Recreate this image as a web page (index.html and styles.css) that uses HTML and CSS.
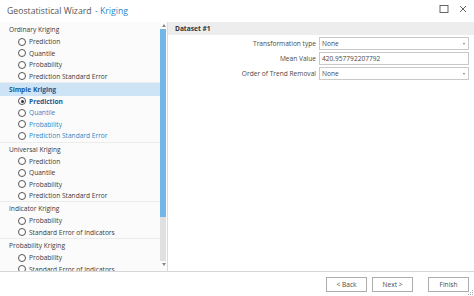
FILE: index.html
```html
<!DOCTYPE html>
<html>
<head>
<meta charset="utf-8">
<title>Geostatistical Wizard</title>
<link rel="stylesheet" href="styles.css">
</head>
<body>
<div class="window">
	<div class="titlebar">
		<div class="title">Geostatistical Wizard <span class="page">- Kriging</span></div>
		<div class="controls">
			<svg width="10" height="10" viewBox="0 0 10 10"><rect x="1" y="1.5" width="8" height="7" fill="none" stroke="#555" stroke-width="0.9"/></svg>
			<svg width="10" height="10" viewBox="0 0 10 10"><path d="M2 2 L8 8 M8 2 L2 8" stroke="#555" stroke-width="0.9"/></svg>
		</div>
	</div>

	<div class="main">
		<div class="methods">
			<div class="list">
				<div class="group">
					<div class="head">Ordinary Kriging</div>
					<div class="item"><span class="radio"></span>Prediction</div>
					<div class="item"><span class="radio"></span>Quantile</div>
					<div class="item"><span class="radio"></span>Probability</div>
					<div class="item"><span class="radio"></span>Prediction Standard Error</div>
				</div>
				<div class="group active">
					<div class="head">Simple Kriging</div>
					<div class="item selected"><span class="radio on"></span>Prediction</div>
					<div class="item"><span class="radio"></span>Quantile</div>
					<div class="item"><span class="radio"></span>Probability</div>
					<div class="item"><span class="radio"></span>Prediction Standard Error</div>
				</div>
				<div class="group">
					<div class="head">Universal Kriging</div>
					<div class="item"><span class="radio"></span>Prediction</div>
					<div class="item"><span class="radio"></span>Quantile</div>
					<div class="item"><span class="radio"></span>Probability</div>
					<div class="item"><span class="radio"></span>Prediction Standard Error</div>
				</div>
				<div class="group">
					<div class="head">Indicator Kriging</div>
					<div class="item"><span class="radio"></span>Probability</div>
					<div class="item"><span class="radio"></span>Standard Error of Indicators</div>
				</div>
				<div class="group">
					<div class="head">Probability Kriging</div>
					<div class="item"><span class="radio"></span>Probability</div>
					<div class="item"><span class="radio"></span>Standard Error of Indicators</div>
				</div>
			</div>
			<div class="scrollbar">
				<div class="arrow up"></div>
				<div class="track"><div class="thumb"></div></div>
				<div class="arrow down"></div>
			</div>
		</div>

		<div class="props">
			<div class="dataset">Dataset #1</div>
			<div class="grid">
				<div class="label">Transformation type</div>
				<div class="field combo">None</div>
				<div class="label">Mean Value</div>
				<div class="field">420.957792207792</div>
				<div class="label">Order of Trend Removal</div>
				<div class="field combo">None</div>
			</div>
		</div>
	</div>

	<div class="footer">
		<button class="btn">&lt; Back</button>
		<button class="btn">Next &gt;</button>
		<button class="btn finish">Finish</button>
		<svg class="grip" width="5" height="5" viewBox="0 0 5 5"><rect x="4" y="0" width="1" height="1" fill="#aaa"/><rect x="2" y="2" width="1" height="1" fill="#aaa"/><rect x="4" y="2" width="1" height="1" fill="#aaa"/><rect x="0" y="4" width="1" height="1" fill="#aaa"/><rect x="2" y="4" width="1" height="1" fill="#aaa"/><rect x="4" y="4" width="1" height="1" fill="#aaa"/></svg>
	</div>
</div>
</body>
</html>
```

FILE: styles.css
```css
html, body {
	margin: 0;
	padding: 0;
	background: #ffffff;
}

.window {
	width: 474px;
	height: 296px;
	display: flex;
	flex-direction: column;
	font-family: "Open Sans", sans-serif;
	color: #3a3a3a;
	background: #ffffff;
	overflow: hidden;
}

.titlebar {
	height: 22px;
	display: flex;
	align-items: center;
	justify-content: space-between;
	padding: 0 6px 0 7px;
	flex: none;
}

.title {
	font-size: 8.7px;
	color: #555;
}

.title .page {
	color: #1f87c8;
	margin-left: 1px;
}

.controls {
	display: flex;
	gap: 9px;
	margin-top: -4px;
}

.main {
	height: 249px;
	display: flex;
	border-bottom: 1px solid #d6d6d6;
	flex: none;
}

/* left list of kriging methods */
.methods {
	width: 167px;
	display: flex;
	border-right: 1px solid #dcdcdc;
	background: #fbfbfb;
}

.list {
	flex: 1;
	overflow: hidden;
	font-size: 6.6px;
}

.head {
	height: 13.8px;
	line-height: 13.8px;
	padding-left: 9px;
	border-top: 1px solid #ececec;
	box-sizing: border-box;
	color: #3a3a3a;
}

.group:first-child .head {
	border-top-color: transparent;
}

.group.active .head {
	background: #cde3f6;
	color: #1c5a93;
	font-weight: bold;
}

.group.active .item {
	color: #2a88c8;
}

.group.active .item.selected {
	color: #1c5a93;
	font-weight: bold;
}

.item {
	height: 11.5px;
	display: flex;
	align-items: center;
	padding-left: 18px;
}

.radio {
	width: 6px;
	height: 6px;
	border: 0.8px solid #555;
	border-radius: 50%;
	margin-right: 3px;
	display: flex;
	align-items: center;
	justify-content: center;
	background: #fff;
}

.radio.on::after {
	content: "";
	width: 3px;
	height: 3px;
	border-radius: 50%;
	background: #333;
}

.scrollbar {
	width: 7px;
	display: flex;
	flex-direction: column;
	padding-bottom: 3px;
}

.arrow {
	height: 7px;
	display: flex;
	align-items: center;
	justify-content: center;
}

.arrow::before {
	content: "";
	border-left: 2px solid transparent;
	border-right: 2px solid transparent;
}

.arrow.up::before {
	border-bottom: 3px solid #888;
}

.arrow.down::before {
	border-top: 3px solid #888;
}

.track {
	flex: 1;
	width: 6px;
	background: #e0e0e0;
}

.thumb {
	height: 188px;
	background: #72b7e5;
}

/* right property panel */
.props {
	flex: 1;
	background: #ffffff;
	padding-right: 5px;
	font-size: 6.6px;
}

.dataset {
	height: 13px;
	line-height: 13px;
	margin-right: -5px;
	padding-left: 7px;
	background: #ededed;
	font-weight: bold;
	color: #333;
}

.grid {
	display: grid;
	grid-template-columns: 148px 1fr;
	column-gap: 3px;
	row-gap: 2px;
	padding-top: 2px;
}

.label {
	height: 13px;
	line-height: 13px;
	text-align: right;
	color: #4a4a4a;
}

.field {
	height: 13px;
	line-height: 11px;
	box-sizing: border-box;
	border: 1px solid #c9c9c9;
	padding-left: 2px;
	color: #4a4a4a;
	position: relative;
}

.field.combo::after {
	content: "";
	position: absolute;
	right: 3px;
	top: 5px;
	border-left: 1.5px solid transparent;
	border-right: 1.5px solid transparent;
	border-top: 2px solid #777;
}

.footer {
	flex: 1;
	display: flex;
	align-items: center;
	justify-content: flex-end;
	padding-right: 5px;
	gap: 5px;
	position: relative;
}

.btn {
	width: 41px;
	height: 15px;
	padding: 0;
	font-family: "Open Sans", sans-serif;
	font-size: 6.6px;
	color: #4a4a4a;
	background: #ffffff;
	border: 1px solid #adadad;
}

.btn.finish {
	margin-left: 10px;
}

.grip {
	position: absolute;
	right: 1px;
	bottom: 1px;
}
```
